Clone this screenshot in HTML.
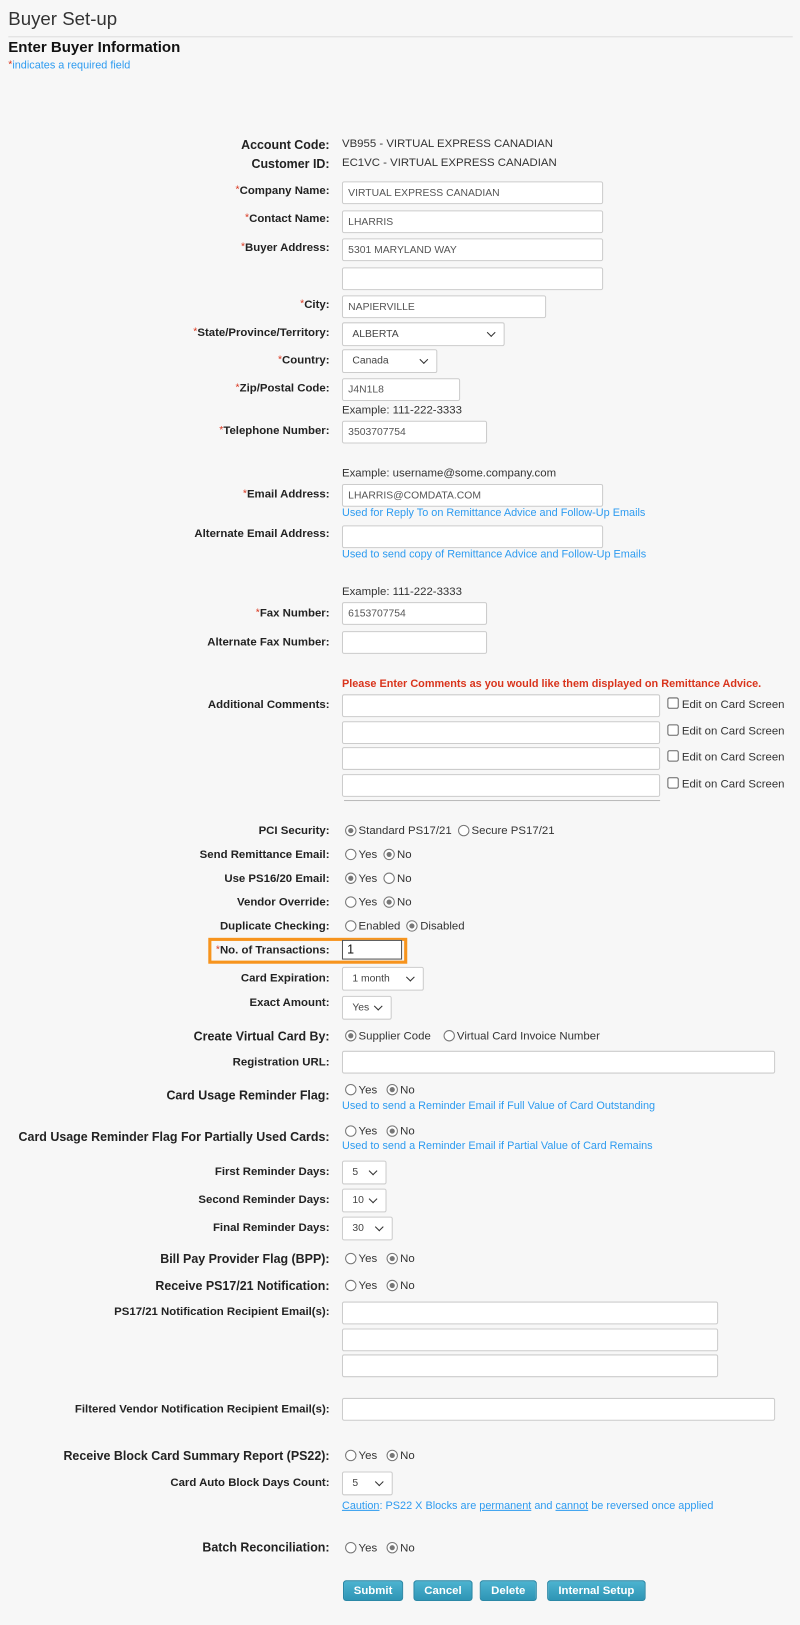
<!DOCTYPE html>
<html><head><meta charset="utf-8">
<style>
html,body{margin:0;padding:0;background:#f7f7f7;width:800px;height:1625px;overflow:hidden}
#w{position:absolute;left:0;top:0;width:772px;height:1568px;transform:scale(1.03627);transform-origin:0 0;font-family:"Liberation Sans",Arial,sans-serif;color:#222}
#w div,#w span{position:absolute;white-space:nowrap}
.l{right:454px;font-size:11px;font-weight:bold;color:#222;text-align:right}
.L{right:454px;font-size:12px;font-weight:bold;color:#222;text-align:right}
.r{color:#d9341c;font-weight:normal;font-size:10px;vertical-align:top}
.v{left:330px;font-size:11px;color:#333}
.i{background:#fff;border:1px solid #ccc;border-radius:2px;box-sizing:border-box;font-size:10px;color:#555;padding:5px 0 0 5px;height:22px}
.s{background:#fff;border:1px solid #ccc;border-radius:2px;box-sizing:border-box;font-size:10px;color:#444;padding:5px 0 0 9px;height:23px}
.s:after{content:"";position:absolute;right:9px;top:6px;width:5px;height:5px;border-right:1.6px solid #333;border-bottom:1.6px solid #333;transform:rotate(45deg)}
.h{font-size:10.5px;color:#2d9bf0}
.rd{display:inline-block;position:relative!important;width:11px;height:11px;border:1px solid #777;border-radius:50%;background:#fff;box-sizing:border-box;vertical-align:-2px;margin-right:2px}
.rd.c:after{content:"";position:absolute;left:2px;top:2px;width:5px;height:5px;border-radius:50%;background:#777}
.o{font-size:11px;color:#333;left:333px}
.cb{display:inline-block;position:relative!important;width:11px;height:11px;border:1px solid #666;border-radius:2px;background:#fff;box-sizing:border-box;vertical-align:-1px;margin-right:3px}
.b{height:20px;top:1525px;background:linear-gradient(#4cb3d0,#2f95b5);border:1px solid #2b88a6;border-radius:3px;box-sizing:border-box;color:#fff;font-weight:bold;font-size:11px;text-align:center;line-height:18px}
</style></head><body><div id="w">
<div style="left:8px;top:8px;font-size:18px;color:#333">Buyer Set-up</div>
<div style="left:8px;top:35px;width:757px;height:1px;background:#ddd"></div>
<div style="left:8px;top:38px;font-size:14.5px;font-weight:bold;color:#111">Enter Buyer Information</div>
<div style="left:8px;top:57px;font-size:10.5px;color:#2d9bf0"><span class="r" style="position:static">*</span>indicates a required field</div>

<div class="L" style="top:133px">Account Code:</div><div class="v" style="top:133px">VB955 - VIRTUAL EXPRESS CANADIAN</div>
<div class="L" style="top:151px">Customer ID:</div><div class="v" style="top:151px">EC1VC - VIRTUAL EXPRESS CANADIAN</div>

<div class="l" style="top:178px"><span class="r" style="position:static">*</span>Company Name:</div><div class="i" style="left:330px;top:175px;width:252px">VIRTUAL EXPRESS CANADIAN</div>
<div class="l" style="top:205px"><span class="r" style="position:static">*</span>Contact Name:</div><div class="i" style="left:330px;top:203px;width:252px">LHARRIS</div>
<div class="l" style="top:233px"><span class="r" style="position:static">*</span>Buyer Address:</div><div class="i" style="left:330px;top:230px;width:252px">5301 MARYLAND WAY</div>
<div class="i" style="left:330px;top:258px;width:252px"></div>
<div class="l" style="top:288px"><span class="r" style="position:static">*</span>City:</div><div class="i" style="left:330px;top:285px;width:197px">NAPIERVILLE</div>
<div class="l" style="top:315px"><span class="r" style="position:static">*</span>State/Province/Territory:</div><div class="s" style="left:330px;top:311px;width:157px">ALBERTA</div>
<div class="l" style="top:342px"><span class="r" style="position:static">*</span>Country:</div><div class="s" style="left:330px;top:337px;width:92px">Canada</div>
<div class="l" style="top:369px"><span class="r" style="position:static">*</span>Zip/Postal Code:</div><div class="i" style="left:330px;top:365px;width:114px">J4N1L8</div>
<div class="v" style="top:390px">Example: 111-222-3333</div>
<div class="l" style="top:410px"><span class="r" style="position:static">*</span>Telephone Number:</div><div class="i" style="left:330px;top:406px;width:140px">3503707754</div>

<div class="v" style="top:451px">Example: username@some.company.com</div>
<div class="l" style="top:471px"><span class="r" style="position:static">*</span>Email Address:</div><div class="i" style="left:330px;top:467px;width:252px">LHARRIS@COMDATA.COM</div>
<div class="h" style="left:330px;top:489px">Used for Reply To on Remittance Advice and Follow-Up Emails</div>
<div class="l" style="top:509px">Alternate Email Address:</div><div class="i" style="left:330px;top:507px;width:252px"></div>
<div class="h" style="left:330px;top:529px">Used to send copy of Remittance Advice and Follow-Up Emails</div>

<div class="v" style="top:565px">Example: 111-222-3333</div>
<div class="l" style="top:586px"><span class="r" style="position:static">*</span>Fax Number:</div><div class="i" style="left:330px;top:581px;width:140px">6153707754</div>
<div class="l" style="top:614px">Alternate Fax Number:</div><div class="i" style="left:330px;top:609px;width:140px"></div>

<div style="left:330px;top:654px;font-size:10.5px;font-weight:bold;color:#d9341c">Please Enter Comments as you would like them displayed on Remittance Advice.</div>
<div class="l" style="top:674px">Additional Comments:</div>
<div class="i" style="left:330px;top:670px;width:307px"></div><div class="o" style="left:644px;top:673px"><span class="cb"></span>Edit on Card Screen</div>
<div class="i" style="left:330px;top:696px;width:307px"></div><div class="o" style="left:644px;top:699px"><span class="cb"></span>Edit on Card Screen</div>
<div class="i" style="left:330px;top:721px;width:307px"></div><div class="o" style="left:644px;top:724px"><span class="cb"></span>Edit on Card Screen</div>
<div class="i" style="left:330px;top:747px;width:307px"></div><div class="o" style="left:644px;top:750px"><span class="cb"></span>Edit on Card Screen</div>
<div style="left:332px;top:772px;width:305px;height:1px;background:#bbb"></div>

<div class="l" style="top:796px">PCI Security:</div><div class="o" style="top:796px"><span class="rd c"></span>Standard PS17/21 &nbsp;<span class="rd"></span>Secure PS17/21</div>
<div class="l" style="top:819px">Send Remittance Email:</div><div class="o" style="top:819px"><span class="rd"></span>Yes &nbsp;<span class="rd c"></span>No</div>
<div class="l" style="top:842px">Use PS16/20 Email:</div><div class="o" style="top:842px"><span class="rd c"></span>Yes &nbsp;<span class="rd"></span>No</div>
<div class="l" style="top:865px">Vendor Override:</div><div class="o" style="top:865px"><span class="rd"></span>Yes &nbsp;<span class="rd c"></span>No</div>
<div class="l" style="top:888px">Duplicate Checking:</div><div class="o" style="top:888px"><span class="rd"></span>Enabled &nbsp;<span class="rd c"></span>Disabled</div>
<div style="left:201px;top:905px;width:192px;height:25px;border:3px solid #f7941d;box-sizing:border-box"></div>
<div class="l" style="top:911px"><span class="r" style="position:static">*</span>No. of Transactions:</div>
<div style="left:330px;top:907px;width:58px;height:19px;border:1px solid #555;background:#fff;box-sizing:border-box;font-size:12px;padding:1px 0 0 4px;color:#111">1</div>
<div class="l" style="top:938px">Card Expiration:</div><div class="s" style="left:330px;top:933px;width:79px">1 month</div>
<div class="l" style="top:962px">Exact Amount:</div><div class="s" style="left:330px;top:961px;width:48px">Yes</div>
<div class="L" style="top:993px">Create Virtual Card By:</div><div class="o" style="top:994px"><span class="rd c"></span>Supplier Code &nbsp;&nbsp; <span class="rd"></span>Virtual Card Invoice Number</div>
<div class="l" style="top:1019px">Registration URL:</div><div class="i" style="left:330px;top:1014px;width:418px"></div>
<div class="L" style="top:1050px">Card Usage Reminder Flag:</div><div class="o" style="top:1046px"><span class="rd"></span>Yes &nbsp; <span class="rd c"></span>No</div>
<div class="h" style="left:330px;top:1061px">Used to send a Reminder Email if Full Value of Card Outstanding</div>
<div class="L" style="top:1090px">Card Usage Reminder Flag For Partially Used Cards:</div><div class="o" style="top:1086px"><span class="rd"></span>Yes &nbsp; <span class="rd c"></span>No</div>
<div class="h" style="left:330px;top:1100px">Used to send a Reminder Email if Partial Value of Card Remains</div>
<div class="l" style="top:1125px">First Reminder Days:</div><div class="s" style="left:330px;top:1120px;width:43px">5</div>
<div class="l" style="top:1152px">Second Reminder Days:</div><div class="s" style="left:330px;top:1147px;width:43px">10</div>
<div class="l" style="top:1179px">Final Reminder Days:</div><div class="s" style="left:330px;top:1174px;width:49px">30</div>
<div class="L" style="top:1208px">Bill Pay Provider Flag (BPP):</div><div class="o" style="top:1209px"><span class="rd"></span>Yes &nbsp; <span class="rd c"></span>No</div>
<div class="L" style="top:1234px">Receive PS17/21 Notification:</div><div class="o" style="top:1235px"><span class="rd"></span>Yes &nbsp; <span class="rd c"></span>No</div>
<div class="l" style="top:1260px">PS17/21 Notification Recipient Email(s):</div>
<div class="i" style="left:330px;top:1256px;width:363px"></div>
<div class="i" style="left:330px;top:1282px;width:363px"></div>
<div class="i" style="left:330px;top:1307px;width:363px"></div>
<div class="l" style="top:1354px">Filtered Vendor Notification Recipient Email(s):</div><div class="i" style="left:330px;top:1349px;width:418px"></div>
<div class="L" style="top:1398px">Receive Block Card Summary Report (PS22):</div><div class="o" style="top:1399px"><span class="rd"></span>Yes &nbsp; <span class="rd c"></span>No</div>
<div class="l" style="top:1425px">Card Auto Block Days Count:</div><div class="s" style="left:330px;top:1420px;width:49px">5</div>
<div class="h" style="left:330px;top:1447px"><u>Caution</u>: PS22 X Blocks are <u>permanent</u> and <u>cannot</u> be reversed once applied</div>
<div class="L" style="top:1486px">Batch Reconciliation:</div><div class="o" style="top:1488px"><span class="rd"></span>Yes &nbsp; <span class="rd c"></span>No</div>
<div class="b" style="left:331px;width:58px">Submit</div>
<div class="b" style="left:399px;width:57px">Cancel</div>
<div class="b" style="left:463px;width:55px">Delete</div>
<div class="b" style="left:528px;width:95px">Internal Setup</div>
</div></body></html>
